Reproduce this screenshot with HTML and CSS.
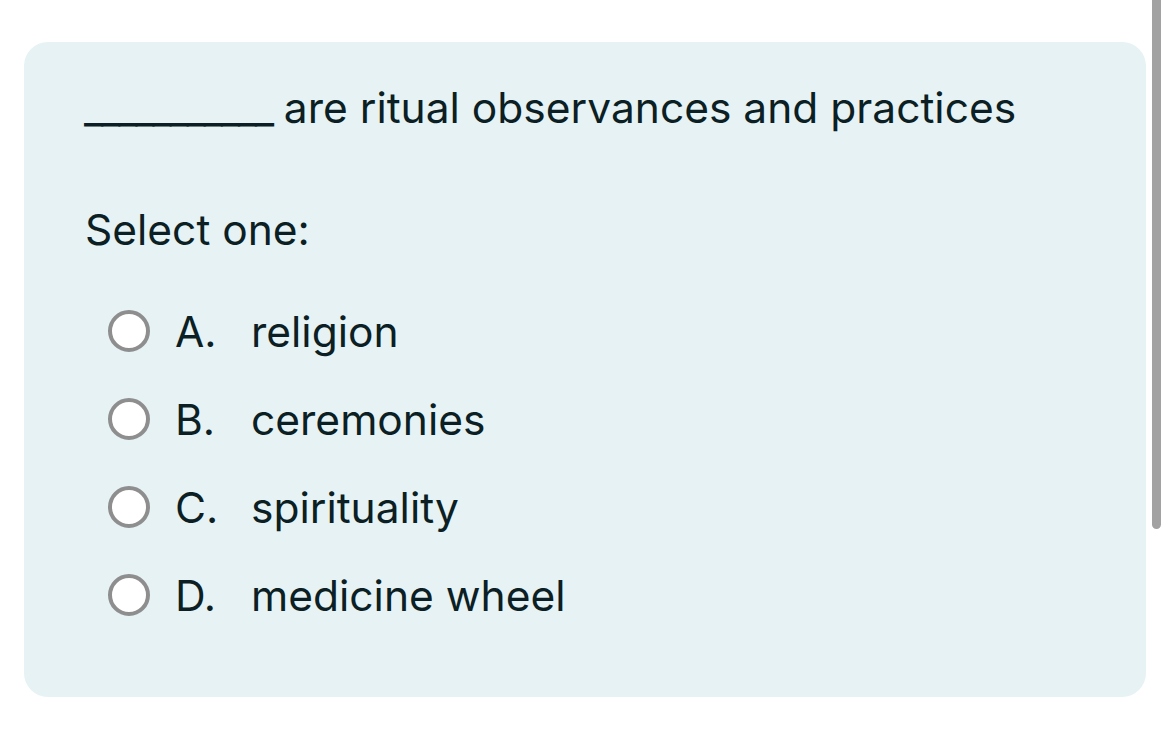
FILE: index.html
```html
<!DOCTYPE html>
<html lang="en">
<head>
<meta charset="utf-8">
<title>Question</title>
<link rel="stylesheet" href="styles.css">
</head>
<body>
<main class="page">
  <section class="card">
    <p class="question"><span class="blank">___________</span> are ritual observances and practices</p>
    <p class="prompt">Select one:</p>
    <ul class="options">
      <li class="option"><span class="radio"></span><span class="letter">A.</span><span class="label">religion</span></li>
      <li class="option"><span class="radio"></span><span class="letter">B.</span><span class="label">ceremonies</span></li>
      <li class="option"><span class="radio"></span><span class="letter">C.</span><span class="label">spirituality</span></li>
      <li class="option"><span class="radio"></span><span class="letter">D.</span><span class="label">medicine wheel</span></li>
    </ul>
  </section>
</main>
<div class="scrollbar"></div>
</body>
</html>
```

FILE: styles.css
```css
html, body {
  margin: 0;
  padding: 0;
  background: #ffffff;
}
body {
  font-family: Inter, "Noto Sans", "Liberation Sans", sans-serif;
  color: #0b1f24;
}
.page {
  padding: 42px 24px 46px 24px;
}
.card {
  background: #e7f2f4;
  border-radius: 24px;
  padding: 42px 60px 57px 60px;
  height: 655px;
  box-sizing: border-box;
}
.question {
  margin: 0;
  font-size: 42.5px;
  line-height: 48px;
  white-space: nowrap;
}
.blank {
  white-space: nowrap;
  letter-spacing: -2.3px;
}
.prompt {
  margin: 74px 0 0 1px;
  font-size: 42.5px;
  line-height: 48px;
}
.options {
  list-style: none;
  margin: 33px 0 0 0;
  padding: 0 0 0 24px;
}
.option {
  display: flex;
  align-items: center;
  height: 88px;
  font-size: 42.5px;
}
.radio {
  width: 42px;
  height: 42px;
  box-sizing: border-box;
  border: 4px solid #8e8e8f;
  border-radius: 50%;
  background: #ffffff;
  flex: none;
  margin-right: 25px;
}
.letter {
  width: 76px;
  flex: none;
}
.scrollbar {
  position: fixed;
  top: -10px;
  left: 1152px;
  width: 9px;
  height: 539px;
  border-radius: 5px;
  background: #a2a2a2;
}
```
